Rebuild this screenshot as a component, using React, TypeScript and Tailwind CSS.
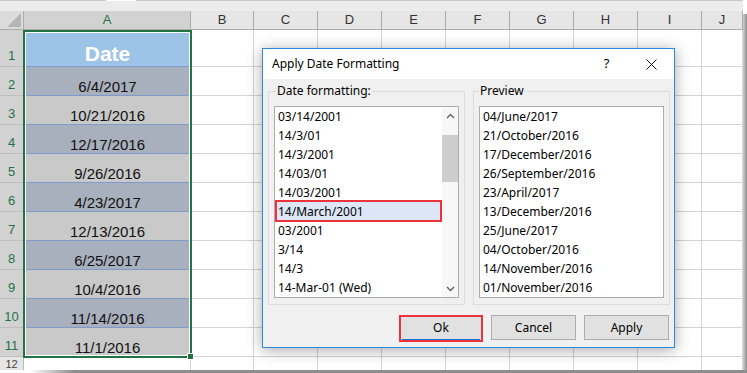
import React from "react";

const DATES = [
  "6/4/2017",
  "10/21/2016",
  "12/17/2016",
  "9/26/2016",
  "4/23/2017",
  "12/13/2016",
  "6/25/2017",
  "10/4/2016",
  "11/14/2016",
  "11/1/2016",
];

const FORMATS = [
  "03/14/2001",
  "14/3/01",
  "14/3/2001",
  "14/03/01",
  "14/03/2001",
  "14/March/2001",
  "03/2001",
  "3/14",
  "14/3",
  "14-Mar-01 (Wed)",
];

const PREVIEW = [
  "04/June/2017",
  "21/October/2016",
  "17/December/2016",
  "26/September/2016",
  "23/April/2017",
  "13/December/2016",
  "25/June/2017",
  "04/October/2016",
  "14/November/2016",
  "01/November/2016",
];

const COLS = [
  { letter: "B", width: "w-[63px]" },
  { letter: "C", width: "w-[64px]" },
  { letter: "D", width: "w-[64px]" },
  { letter: "E", width: "w-[64px]" },
  { letter: "F", width: "w-[64px]" },
  { letter: "G", width: "w-[64px]" },
  { letter: "H", width: "w-[64px]" },
  { letter: "I", width: "w-[64px]" },
  { letter: "J", width: "flex-1" },
];

// row 1 is taller than the rest
const ROWS = Array.from({ length: 11 }, (_, i) => (i === 0 ? "h-[37px]" : "h-[29px]"));

function RowHeaders() {
  return (
    <div className="flex w-[24px] flex-col">
      <div className="flex h-[19px] shrink-0 items-end justify-end border-b border-r border-[#ababab] bg-[#dcdcdc] pb-[2px] pr-[2px]">
        <svg width="14" height="14" viewBox="0 0 14 14">
          <polygon points="14,0 14,14 0,14" fill="#b5b5b5" />
        </svg>
      </div>
      {ROWS.map((h, i) => (
        <div
          key={i}
          className={`${h} flex shrink-0 items-end justify-center border-b border-r border-[#bdbdbd] bg-[#d2d2d2] pb-[3px] text-[13px] leading-[15px] text-[#217346]`}
        >
          {i + 1}
        </div>
      ))}
      <div className="flex min-h-0 flex-1 items-end justify-center overflow-hidden border-r border-[#bdbdbd] bg-[#e6e6e6] text-[11px] leading-[12px] text-[#444]">
        12
      </div>
    </div>
  );
}

function DateColumn() {
  return (
    <div className="flex w-[167px] flex-col">
      <div className="flex h-[19px] shrink-0 items-center justify-center border-b border-r border-[#ababab] bg-[#d2d2d2] text-[13px] text-[#217346]">
        A
      </div>
      <div className="relative flex shrink-0 flex-col">
        <div className="flex h-[37px] items-end justify-center border-b border-[#7f9bcb] bg-[#9dc3e6] text-[21px] font-bold leading-[24px] text-white">
          Date
        </div>
        {DATES.map((d, i) => (
          <div
            key={d}
            className={`flex h-[29px] items-end justify-center border-b border-[#7f9bcb] text-[15px] leading-[17px] text-[#111] ${
              i % 2 === 0 ? "bg-[#a9b0bd]" : "bg-[#c9c9c9]"
            }`}
          >
            {d}
          </div>
        ))}
        <div className="pointer-events-none absolute -bottom-[1px] -left-[1px] -right-[1px] top-0 border-2 border-[#217346]">
          <div className="h-full w-full border border-white" />
          <div className="absolute -bottom-[4px] -right-[4px] h-[7px] w-[7px] border border-white bg-[#217346]" />
        </div>
      </div>
      <div className="min-h-0 flex-1 border-r border-[#d4d4d4]" />
    </div>
  );
}

function Column({ letter, width }: { letter: string; width: string }) {
  return (
    <div className={`flex ${width} flex-col`}>
      <div className="flex h-[19px] shrink-0 items-center justify-center border-b border-r border-[#ababab] bg-[#e6e6e6] text-[13px] text-[#333]">
        {letter}
      </div>
      {ROWS.map((h, i) => (
        <div key={i} className={`${h} shrink-0 border-b border-r border-[#d4d4d4]`} />
      ))}
      <div className="min-h-0 flex-1 border-r border-[#d4d4d4]" />
    </div>
  );
}

function Chevron({ up }: { up?: boolean }) {
  return (
    <svg width="9" height="6" viewBox="0 0 9 6">
      <polyline
        points={up ? "1,5 4.5,1.5 8,5" : "1,1 4.5,4.5 8,1"}
        fill="none"
        stroke="#606060"
        strokeWidth="1.4"
      />
    </svg>
  );
}

function Dialog() {
  return (
    <div className="absolute left-[262px] top-[48px] flex h-[300px] w-[413px] flex-col border border-[#2a8ae0] bg-[#f0f0f0] font-['Noto_Sans',sans-serif] text-[12px] text-black shadow-[0_2px_14px_rgba(0,0,0,0.35)]">
      <div className="flex h-[30px] items-center bg-white">
        <span className="pl-[9px]">Apply Date Formatting</span>
        <div className="ml-auto flex h-full w-[46px] items-center justify-center pl-[3px] text-[13px]">?</div>
        <div className="flex h-full w-[46px] items-center justify-center">
          <svg width="11" height="11" viewBox="0 0 11 11">
            <path d="M0.5 0.5 L10.5 10.5 M10.5 0.5 L0.5 10.5" stroke="#111" strokeWidth="1" />
          </svg>
        </div>
      </div>

      <div className="flex gap-[8px] pl-[5px] pt-[4px]">
        <fieldset className="h-[222px] w-[197px] border border-[#dcdcdc] px-[5px] pt-[7px]">
          <legend className="ml-[2px] px-[1px] leading-[16px]">Date formatting:</legend>
          <div className="flex h-[192px] border border-[#acacac] bg-white">
            <div className="flex flex-1 flex-col">
              {FORMATS.map((f, i) => (
                <div
                  key={f}
                  className={`relative flex h-[19px] items-center pl-[3px] ${i === 5 ? "bg-[#dce6f7]" : ""}`}
                >
                  {f}
                  {i === 5 && (
                    <div className="absolute -bottom-[1px] -top-[2px] left-0 right-0 border-2 border-[#ee3239]" />
                  )}
                </div>
              ))}
            </div>
            <div className="flex w-[16px] flex-col bg-[#f7f7f7]">
              <div className="flex h-[17px] items-center justify-center">
                <Chevron up />
              </div>
              <div className="mt-[11px] h-[47px] bg-[#cdcdcd]" />
              <div className="flex-1" />
              <div className="flex h-[17px] items-center justify-center">
                <Chevron />
              </div>
            </div>
          </div>
        </fieldset>

        <fieldset className="h-[222px] w-[197px] border border-[#dcdcdc] px-[5px] pt-[7px]">
          <legend className="px-[1px] leading-[16px]">Preview</legend>
          <div className="flex h-[192px] flex-col border border-[#acacac] bg-white">
            {PREVIEW.map((p) => (
              <div key={p} className="flex h-[19px] items-center pl-[3px]">
                {p}
              </div>
            ))}
          </div>
        </fieldset>
      </div>

      <div className="mt-[10px] flex items-start justify-end gap-[8px] pr-[5px]">
        <button className="flex h-[27px] w-[84px] border-2 border-[#ee3239] bg-[#e1e1e1] px-[1px]">
          <span className="flex h-full w-full items-center justify-center border-b border-[#0f74d8]">Ok</span>
        </button>
        <button className="flex h-[25px] w-[85px] items-center justify-center border border-[#adadad] bg-[#e1e1e1]">
          Cancel
        </button>
        <button className="flex h-[25px] w-[85px] items-center justify-center border border-[#adadad] bg-[#e1e1e1]">
          Apply
        </button>
      </div>
    </div>
  );
}

export default function App() {
  return (
    <div className="relative h-[373px] w-[747px] overflow-hidden bg-white font-['Liberation_Sans',Arial,sans-serif]">
      <div className="flex h-[370px]">
        <div className="flex w-[743px] flex-col">
          <div className="flex h-[11px] shrink-0 flex-col bg-[#ececec]">
            <div className="flex h-px">
              <div className="w-[106px] bg-[#c8c8c8]" />
              <div className="w-[30px] bg-white" />
              <div className="flex-1 bg-[#c8c8c8]" />
            </div>
          </div>
          <div className="flex min-h-0 flex-1 overflow-hidden">
            <RowHeaders />
            <DateColumn />
            {COLS.map((c) => (
              <Column key={c.letter} letter={c.letter} width={c.width} />
            ))}
          </div>
        </div>
        <div className="flex w-[4px] flex-col">
          <div className="mt-[14px] flex-1 bg-linear-to-r from-[#d2d2d2] to-[#8d8d8d]" />
        </div>
      </div>
      <div className="h-[3px] bg-linear-to-r from-white from-4% to-[#8e8e8e] to-10%" />
      <Dialog />
    </div>
  );
}
